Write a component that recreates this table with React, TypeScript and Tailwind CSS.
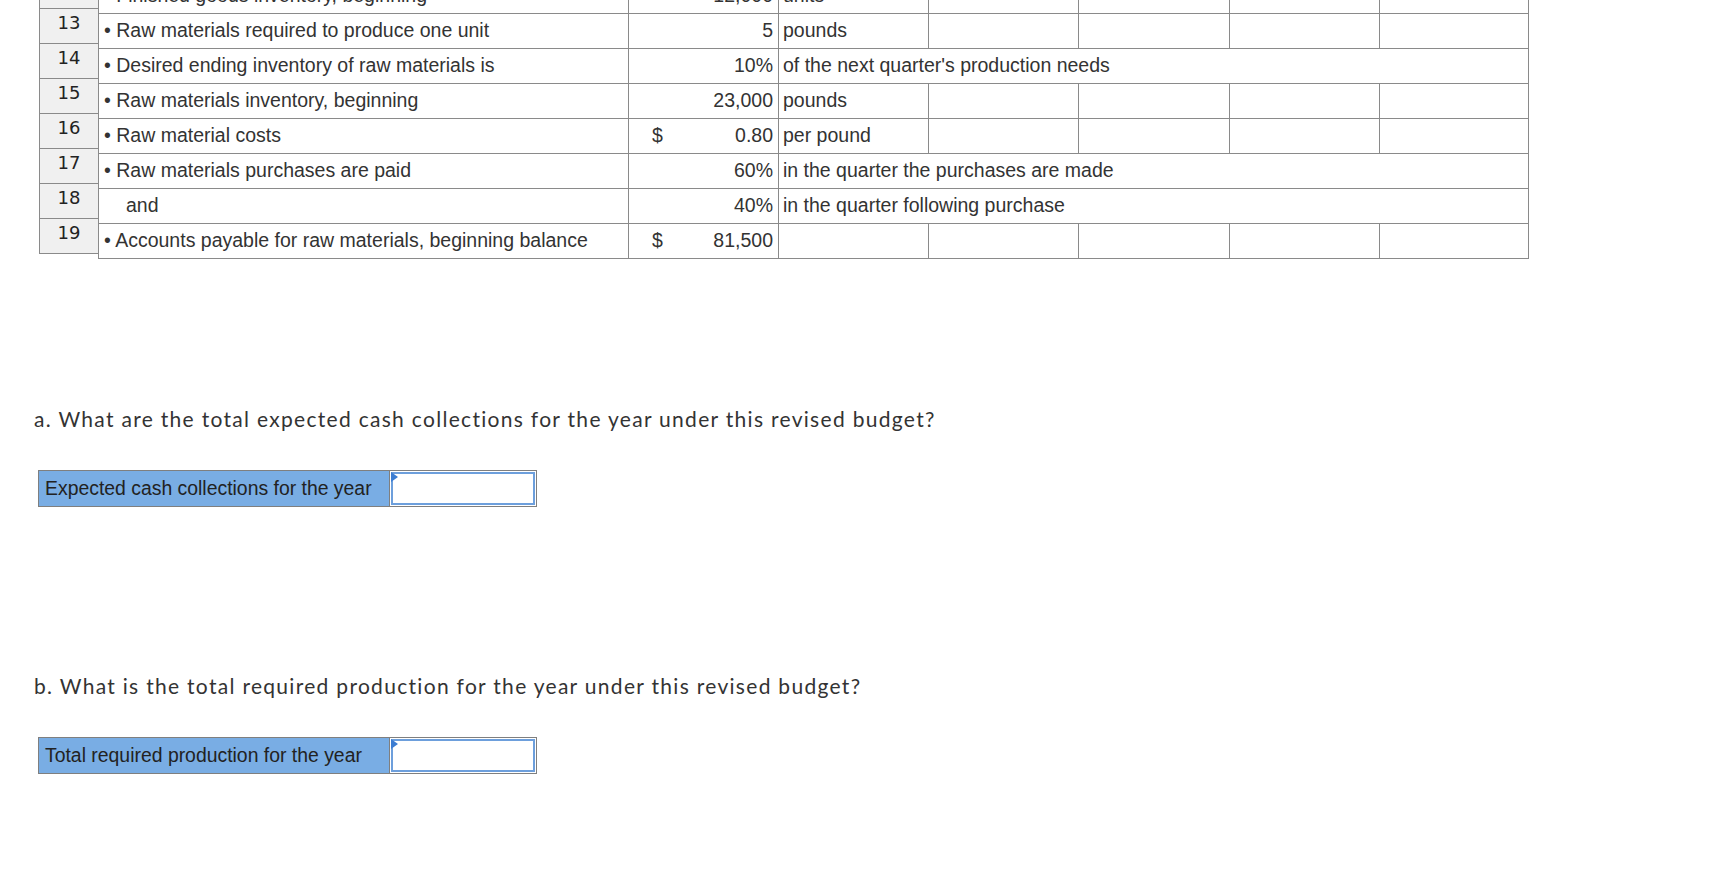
type Row = {
  num: number
  label: string
  indent?: boolean
  dollar?: boolean
  value: string
  unit: string
  merged?: boolean
}

const rows: Row[] = [
  { num: 12, label: '• Finished goods inventory, beginning', value: '12,000', unit: 'units' },
  { num: 13, label: '• Raw materials required to produce one unit', value: '5', unit: 'pounds' },
  { num: 14, label: '• Desired ending inventory of raw materials is', value: '10%', unit: "of the next quarter's production needs", merged: true },
  { num: 15, label: '• Raw materials inventory, beginning', value: '23,000', unit: 'pounds' },
  { num: 16, label: '• Raw material costs', dollar: true, value: '0.80', unit: 'per pound' },
  { num: 17, label: '• Raw materials purchases are paid', value: '60%', unit: 'in the quarter the purchases are made', merged: true },
  { num: 18, label: 'and', indent: true, value: '40%', unit: 'in the quarter following purchase', merged: true },
  { num: 19, label: '• Accounts payable for raw materials, beginning balance', dollar: true, value: '81,500', unit: '' },
]

const cell = 'h-[35px] flex items-center border-r border-b border-[#8a8a8a]'

function DataRow({ row }: { row: Row }) {
  return (
    <div className="flex">
      <div className={`${cell} w-[530px] ${row.indent ? 'pl-[27px]' : 'pl-[5px]'}`}>{row.label}</div>
      <div className={`${cell} w-[150px] justify-between pl-[23px] pr-[5px]`}>
        <span>{row.dollar ? '$' : ''}</span>
        <span>{row.value}</span>
      </div>
      {row.merged ? (
        <div className={`${cell} w-[750px] pl-[4px]`}>{row.unit}</div>
      ) : (
        <>
          <div className={`${cell} w-[150px] pl-[4px]`}>{row.unit}</div>
          <div className={`${cell} w-[150px]`} />
          <div className={`${cell} w-[151px]`} />
          <div className={`${cell} w-[150px]`} />
          <div className={`${cell} w-[149px]`} />
        </>
      )}
    </div>
  )
}

function AnswerBox({ label }: { label: string }) {
  return (
    <div className="ml-[38px] flex w-[499px] h-[37px] border border-[#7f7f7f] font-['Liberation_Sans',Arial,sans-serif] text-[19.4px] text-[#222] tracking-normal">
      <div className="w-[351px] bg-[#79ade4] flex items-center pl-[6px] border-r border-[#7f7f7f]">{label}</div>
      <div className="flex-1 bg-white p-[1px]">
        <div className="relative h-full border-2 border-[#6d9fdc]">
          {/* little flag in the corner of the input */}
          <div className="absolute -left-[2px] -top-[2px] w-0 h-0 border-y-[5px] border-y-transparent border-l-[7px] border-l-[#3c7dd2]" />
        </div>
      </div>
    </div>
  )
}

export default function App() {
  return (
    <div className="w-[1726px] h-[891px] bg-white overflow-hidden">
      {/* spreadsheet, scrolled so row 12 is cut off */}
      <div className="flex items-start ml-[39px] -mt-[26px] font-['Liberation_Sans',Arial,sans-serif] text-[19.5px] text-[#333]">
        <div className="w-[59px] border-l border-[#8a8a8a] font-['DejaVu_Sans',Verdana,sans-serif] text-[18px] text-[#222]">
          {rows.map((r) => (
            <div key={r.num} className="h-[35px] bg-[#f0f0f0] border-b border-[#8a8a8a] flex justify-center pt-[2px] leading-[24px]">
              {r.num}
            </div>
          ))}
        </div>
        <div className="mt-[4px] border-l border-t border-[#8a8a8a]">
          {rows.map((r) => (
            <DataRow key={r.num} row={r} />
          ))}
        </div>
      </div>

      <div className="font-['Lato','Open_Sans',sans-serif] text-[21px] text-[#333] tracking-[1.3px]">
        <p className="ml-[34px] mt-[148px] leading-[24px]">
          a. What are the total expected cash collections for the year under this revised budget?
        </p>
        <div className="mt-[39px]">
          <AnswerBox label="Expected cash collections for the year" />
        </div>
        <p className="ml-[34px] mt-[167px] leading-[24px]">
          b. What is the total required production for the year under this revised budget?
        </p>
        <div className="mt-[39px]">
          <AnswerBox label="Total required production for the year" />
        </div>
      </div>
    </div>
  )
}
